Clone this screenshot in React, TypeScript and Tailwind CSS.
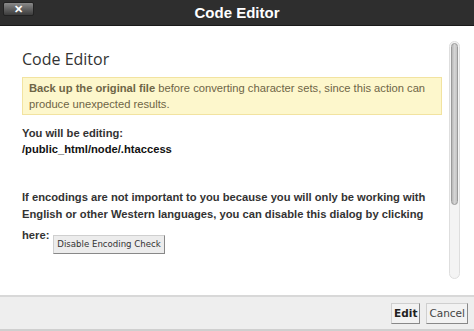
import React from "react";

export default function App() {
  return (
    <div className="w-[474px] h-[331px] overflow-hidden flex flex-col bg-white" style={{ fontFamily: '"Liberation Sans", Arial, sans-serif' }}>
      {/* Title bar */}
      <div className="h-[26px] shrink-0 bg-[#2e2e2e] border-b border-[#1a1a1a] flex items-center relative">
        <div className="absolute left-[3px] top-[2px] w-[31px] h-[14px] rounded-[2px] bg-gradient-to-b from-[#8a8a8a] to-[#3c3c3c] border border-[#222] flex items-center justify-center text-white text-[11px] font-bold leading-none">
          ✕
        </div>
        <div className="flex-1 text-center text-white font-bold text-[15px] leading-none">Code Editor</div>
      </div>

      {/* Content */}
      <div className="flex-1 flex min-h-0 bg-white">
        <div className="flex-1 pl-[22px] pr-[4px] pt-[23px]">
          <div className="text-[16px] text-[#333] leading-[20px]" style={{ fontFamily: '"Open Sans", sans-serif' }}>Code Editor</div>
          <div className="mt-[8px] bg-[#fdf7cc] border border-[#f2e3a0] px-[6px] py-[2px] text-[11.2px] leading-[16px] text-[#6e6546]">
            <b>Back up the original file</b> before converting character sets, since this action can produce unexpected results.
          </div>
          <div className="mt-[10px] text-[11.2px] leading-[16px] font-bold text-[#333]">You will be editing:</div>
          <div className="text-[11.2px] leading-[16px] font-bold text-[#111]">/public_html/node/.htaccess</div>
          <div className="mt-[32px] text-[11.2px] leading-[17px] font-bold text-[#333]">
            If encodings are not important to you because you will only be working with English or other Western languages, you can disable this dialog by clicking
          </div>
          <div className="mt-[4px] flex items-start text-[11.2px] font-bold text-[#333]">
            <span className="leading-[16px]">here:</span>
            <button className="ml-[4px] mt-[8px] h-[19px] px-[3px] bg-[#ececec] border border-[#cfcfcf] border-r-[#888] border-b-[#888] text-[8.6px] font-normal text-[#333] leading-none" style={{ fontFamily: '"DejaVu Sans", sans-serif' }}>
              Disable Encoding Check
            </button>
          </div>
        </div>
        {/* Scrollbar */}
        <div className="w-[28px] shrink-0 pt-[15px] pl-[3px]">
          <div className="w-[11px] h-[238px] rounded-[6px] bg-[#f4f4f4] border border-[#dedede] relative">
            <div className="absolute left-[1px] top-[1px] w-[7px] h-[162px] rounded-[4px] bg-gradient-to-r from-[#b8b8b8] via-[#d4d4d4] to-[#c4c4c4] border border-[#9a9a9a]" />
          </div>
        </div>
      </div>

      {/* Footer */}
      <div className="h-[36px] shrink-0 bg-[#eeeeee] border-t-2 border-[#d8d8d8] border-b-2 border-b-[#cfcfcf] flex items-center justify-end pr-[6px] gap-[6px]" style={{ fontFamily: '"DejaVu Sans", sans-serif' }}>
        <button className="h-[21px] px-[2px] bg-[#f2f2f2] border border-[#cfcfcf] border-r-[#888] border-b-[#888] text-[10.5px] font-bold text-[#222] leading-none">Edit</button>
        <button className="h-[21px] px-[2px] bg-[#f2f2f2] border border-[#cfcfcf] border-r-[#888] border-b-[#888] text-[10.5px] text-[#444] leading-none">Cancel</button>
      </div>
    </div>
  );
}
